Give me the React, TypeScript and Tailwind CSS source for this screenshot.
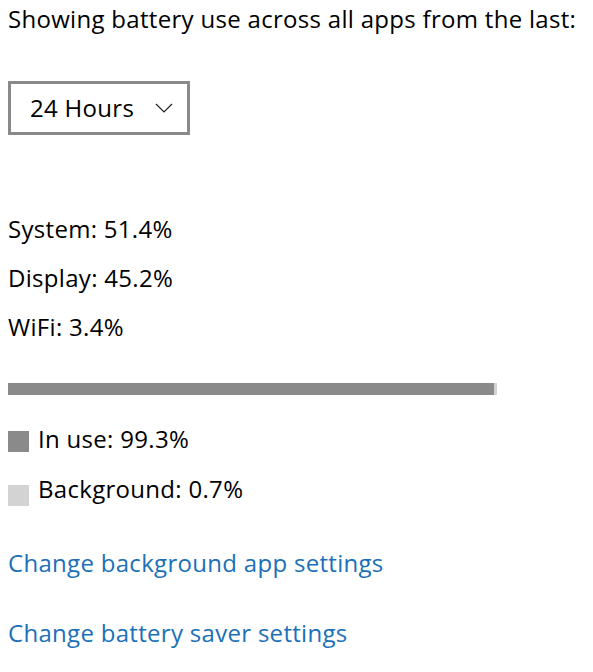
export default function App() {
  const stats = [
    { label: "System", value: "51.4%" },
    { label: "Display", value: "45.2%" },
    { label: "WiFi", value: "3.4%" },
  ];
  const inUse = 99.3;

  return (
    <div
      className="w-[593px] h-[672px] bg-white text-black px-2 pt-[4px] text-[24px] leading-[30px] tracking-[0.3px]"
      style={{ fontFamily: '"Open Sans", "Noto Sans", sans-serif' }}
    >
      <p>Showing battery use across all apps from the last:</p>

      <button className="mt-[47px] flex h-[54px] w-[182px] items-center border-[3px] border-[#8a8a8a] pl-[19px] pr-[14px] tracking-[0.3px]">
        <span>24 Hours</span>
        <svg className="ml-auto" width="18" height="10" viewBox="0 0 18 10" fill="none">
          <path d="M1 1l8 8 8-8" stroke="#222" strokeWidth="1.2" />
        </svg>
      </button>

      <div className="mt-[79px] flex flex-col gap-[19px]">
        {stats.map((s) => (
          <p key={s.label}>
            {s.label}: {s.value}
          </p>
        ))}
      </div>

      <div className="mt-[41px] flex h-[12px] w-[489px]">
        <div className="h-full bg-[#8a8a8a]" style={{ width: `${inUse}%` }} />
        <div className="h-full flex-1 bg-[#d2d2d2]" />
      </div>

      <div className="mt-[29px] flex flex-col gap-[20px]">
        <div className="flex items-end gap-[9px]">
          <span className="mb-[2px] h-[21px] w-[21px] bg-[#8a8a8a]" />
          <span>In use: 99.3%</span>
        </div>
        <div className="flex items-end gap-[9px]">
          <span className="mb-[-2px] h-[21px] w-[21px] bg-[#d3d3d3]" />
          <span>Background: 0.7%</span>
        </div>
      </div>

      <div className="mt-[44px] flex flex-col gap-[40px] text-[#1c70b8]">
        <a>Change background app settings</a>
        <a>Change battery saver settings</a>
      </div>
    </div>
  );
}
